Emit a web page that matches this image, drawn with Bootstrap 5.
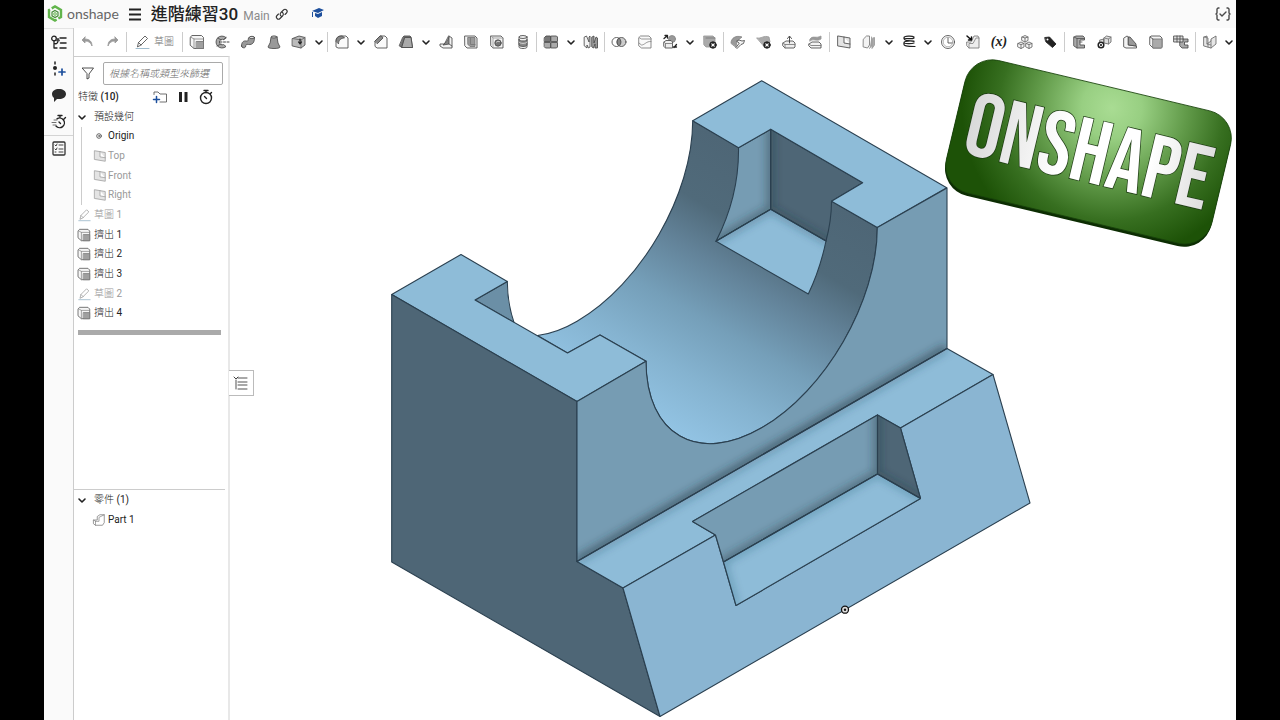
<!DOCTYPE html>
<html lang="zh-Hant">
<head>
<meta charset="utf-8">
<meta name="viewport" content="width=device-width, initial-scale=1">
<title>進階練習30</title>
<link href="https://cdn.jsdelivr.net/npm/bootstrap@5.3.0/dist/css/bootstrap.min.css" rel="stylesheet">
<script src="https://cdn.jsdelivr.net/npm/bootstrap@5.3.0/dist/js/bootstrap.bundle.min.js"></script>
<style>
body{background:#000;font-family:Roboto,"Noto Sans CJK TC",sans-serif;font-size:10px;line-height:16px;color:#222}
.app{margin:0 44px;background:#fff}
button{border:0;background:none;padding:0;color:inherit;line-height:inherit}
svg{display:block}
.ic{width:16px;height:16px;flex:none;fill:none;stroke:#4a4a4a;stroke-width:.85;stroke-linejoin:round;stroke-linecap:round}
.ic-sm{width:14px;height:14px}
.ic-xs{width:10px;height:10px}
.ic-dark{stroke:#222;stroke-width:1.4}
.ic-soft{stroke:#999}
.topbar{height:28px;background:#fafafa;padding:0 5px 0 3px}
.wordmark{font-family:Lato,sans-serif;font-size:14px;color:#666;margin:0 9px 0 4px}
.doc-title{font-size:17px;font-weight:500;line-height:28px;margin:0 5px 0 9px;color:#222}
.branch{font-size:12px;color:#8a8a8a;margin-right:4px}
.learn{margin-left:22px}
.rail{width:30px;background:#fafafa;border-right:1px solid #ccc}
.rail button{height:26px}
.rail .tab-on{height:28px;border-top:1px solid #e4e4e4}
.rail .rail-end{height:28px;border-bottom:1px solid #d4d4d4}
.tools{height:28px}
.tools .lead-btn{width:26px}
.t-ico{flex:26 1 0}
.t-chev{flex:14 1 0}
.t-sep{flex:3 1 0}
.t-ico,.t-chev,.t-sep,.lead-btn{display:flex;align-items:center;justify-content:center;min-width:0}
.t-sep::after,.bar-sep::after{content:"";width:1px;height:20px;background:#ccc;flex:none}
.bar-sep{width:2px;display:flex;align-items:center}
.sketch-btn{width:54px;color:#777;padding-left:6px}
.side{width:156px;border-top:1px solid #ccc;border-right:2px solid #e8e8e8}
.filter-row{height:30px;padding:2px 5px 0 6px}
.filter-row input{width:120px;height:23px;font-size:10px;font-weight:300;font-style:italic;padding:0 5px;border:1px solid #aaa;border-radius:2px;line-height:16px}
.filter-row input::placeholder{color:#666}
.feat-head{height:20px;gap:7px;padding:0 14px 1px 4px;font-weight:500}
.cj{font-weight:300}
.tree{height:216px}
.tree li{flex:1 1 0;min-height:0}
.row-top{gap:3px;padding-left:3px}
.row-sub{gap:1px;padding-left:11px;margin-left:7px;border-left:1px solid #ccc}
.part-row{gap:2px;padding-left:18px}
.muted{color:#999}
.rollback{height:5px;background:#aaa;margin:7px 7px 0 4px}
.parts{height:231px;border-top:1px solid #ccc;margin-right:3px}
.parts li{height:20px}
.flyout{position:absolute;left:-1px;top:314px;width:25px;height:26px;border:1px solid #bbb;border-left:0;background:#fff;display:flex;align-items:center;justify-content:center}
.e{stroke:#2b4050;stroke-width:1.1;stroke-linejoin:round;stroke-linecap:round}
</style>
</head>
<body>
<svg width="0" height="0" class="position-absolute" aria-hidden="true">
<defs>
<symbol id="chev" viewBox="0 0 10 10"><path d="M2 4l3 3 3-3" stroke="#222" stroke-width="1.6"/></symbol>
<symbol id="pencil" viewBox="0 0 16 16"><path d="M3.500 12.500l1-4L11 2l2.500 2.500L7 11zM4.500 8.500L7 11" /><path d="M2 14.500h13" stroke="#8fb0c4"/></symbol>
<symbol id="extrude" viewBox="0 0 16 16"><path d="M1.500 3L3 1.500h9.500l2 2v11H5l-3.500-3z" fill="#f6f6f6"/><path d="M1.500 3L5 5h9.500M5 5v9.500" stroke="#888"/><path d="M7.500 7.500h7v7h-7z" fill="#a0a0a0" stroke="#777"/></symbol>
<symbol id="plane" viewBox="0 0 16 16"><path d="M2 2l12 2v10L2 12zM8 3v6l6 1" fill="#e4e4e4"/></symbol>
<symbol id="timer" viewBox="0 0 16 16"><circle cx="8" cy="9" r="5.500"/><path d="M8 3.500V2M6 1.500h4M12.500 4.500l1-1M8.500 9.500L6.500 7.500"/></symbol>
</defs>
</svg>
<div class="app d-flex flex-column vh-100 overflow-hidden">
  <header class="topbar d-flex align-items-center">
    <svg width="16" height="18" viewBox="0 0 16 18" fill="none"><path d="M8 1.500l6 3.500v7L8 15.500 2 12V5z" stroke="#62b54c" stroke-width="2.400" stroke-dasharray="17 2"/><path d="M8 5.500l3 1.700v3.600L8 12.500l-3-1.700V7.200z" stroke="#4a8f3d" stroke-width="1.200"/><circle cx="8" cy="9" r="1.300" stroke="#62b54c"/></svg>
    <span class="wordmark">onshape</span>
    <button aria-label="Menu"><svg width="14" height="14" viewBox="0 0 14 14"><path d="M1 2.500h12M1 7.500h12M1 12.500h12" stroke="#222" stroke-width="2"/></svg></button>
    <h1 class="doc-title mb-0">進階練習30</h1>
    <span class="branch mt-1">Main</span>
    <button aria-label="Link"><svg class="ic" viewBox="0 0 16 16"><path d="M7 10a2.300 2.300 0 0 1 0-3.500l2.500-2.500a2 2 0 0 1 3 3l-1.500 1.500M8.500 6.500a2.300 2.300 0 0 1 0 3.500L6 12.500a2 2 0 0 1-3-3L4.500 8" stroke="#333" stroke-width="1.100"/></svg></button>
    <button class="learn" aria-label="Learning center"><svg width="12" height="14" viewBox="0 0 12 14" fill="#1d4f9c"><path d="M0 4l7-3 5 2-6 3z"/><path d="M3 6l3 1 4-2v4L6 11 3 9zM0 5h1v5H0z"/></svg></button>
    <button class="ms-auto" aria-label="Custom features"><svg class="ic" viewBox="0 0 16 16"><path d="M4 2H3L2 3v4L1 8l1 1v4l1 1h1M12 2h1l1 1v4l1 1-1 1v4l-1 1h-1M5 8l2 2 4-4" stroke-width="1.400"/></svg></button>
  </header>
  <div class="d-flex flex-grow-1 overflow-hidden">
    <nav class="rail d-flex flex-column flex-shrink-0">
      <button class="tab-on d-flex align-items-center justify-content-center" aria-label="Feature list"><svg class="ic" viewBox="0 0 16 16"><circle cx="3" cy="3.500" r="2.300" stroke="#222" stroke-width="1.300"/><path d="M3 6v7h3M3 8.500c3 1 4-1 4-3" stroke="#222" stroke-width="1.300"/><path d="M9 3h6M9.500 8H15M9 13h6" stroke="#222" stroke-width="1.500"/><path d="M5.500 5.500L7 3l1.500 2.500z" fill="#222"/></svg></button>
      <button class="d-flex align-items-center justify-content-center" aria-label="Insert"><svg class="ic" viewBox="0 0 16 16"><path d="M4 1v2M4 12v2" stroke="#222" stroke-width="1.500"/><circle cx="4" cy="7" r="2" fill="#222" stroke="none"/><path d="M11 8v6M8 11h6" stroke="#1d4f9c" stroke-width="1.700"/></svg></button>
      <button class="d-flex align-items-center justify-content-center" aria-label="Comments"><svg width="16" height="16" viewBox="0 0 16 16"><path d="M8 2c4 0 7 2 7 5s-3 5-7 5l-2 0-3 3 0-4C2 10 1 9 1 7c0-3 3-5 7-5z" fill="#2c2c2c"/></svg></button>
      <button class="rail-end d-flex align-items-center justify-content-center" aria-label="History"><svg class="ic" viewBox="0 0 16 16"><path d="M6 4.800a4.800 4.800 0 1 1-1 7.200M9 3.500V2M7 1.500h4M13 5l1.500-1.500M9.500 9.500L8 8" stroke="#222" stroke-width="1.400"/><path d="M3 6h3M1 8.500h4M2 11h3" stroke="#555"/></svg></button>
      <button class="d-flex align-items-center justify-content-center" aria-label="Properties"><svg class="ic" viewBox="0 0 16 16"><rect x="2" y="1" width="12" height="13" rx="1" stroke="#333" stroke-width="1.300"/><path d="M4 4l1 1 1-2M8 4h4M4 8l1 1 1-2M8 8h4M4 11h1M8 11h4" stroke="#222"/></svg></button>
    </nav>
    <div class="d-flex flex-column flex-grow-1 overflow-hidden">
      <div class="tools d-flex align-items-stretch" role="toolbar">
        <button class="lead-btn" aria-label="Undo"><svg class="ic" viewBox="0 0 16 16"><path d="M6 3L3 6l3 3V7c4 0 6 2 7 5 0-4-2-7-7-7z" fill="#999" stroke="#999"/></svg></button>
        <button class="lead-btn" aria-label="Redo"><svg class="ic" viewBox="0 0 16 16"><path d="M10 3l3 3-3 3V7c-4 0-6 2-7 5 0-4 2-7 7-7z" fill="#999" stroke="#999"/></svg></button>
        <span class="bar-sep"></span>
        <button class="sketch-btn d-flex align-items-center"><svg class="ic"><use href="#pencil"/></svg><span class="ms-1 cj">草圖</span></button>
        <span class="bar-sep"></span>
        <div class="d-flex flex-grow-1">
          <button class="t-ico" aria-label="Extrude"><svg class="ic"><use href="#extrude"/></svg></button>
          <button class="t-ico" aria-label="Revolve"><svg class="ic" viewBox="0 0 16 16"><path d="M12 3.500a6 6 0 1 0 0 9L9.500 10.500a2.800 2.800 0 1 1 0-5z" fill="#aaa"/><path d="M12 3.500L9.500 5.500M4 4l3 2M3 12l4-2"/><path d="M6 8h9" stroke="#222" stroke-dasharray="2 1.500"/></svg></button>
          <button class="t-ico" aria-label="Sweep"><svg class="ic" viewBox="0 0 16 16"><path d="M1.500 12c0-4 2-5.500 5-5 2 .4 1.500-1 2-3 .5-1.500 4-2 6-.5 0 5-2 7.500-6 7-2.500-.5-2.500 0-3 2.500-1 1.500-4 1-4-1z" fill="#999"/><ellipse cx="12" cy="3.500" rx="2.500" ry="1.200" fill="#ddd"/></svg></button>
          <button class="t-ico" aria-label="Loft"><svg class="ic" viewBox="0 0 16 16"><path d="M5 3c0-1 6-1 6 0l1 6 2 4c0 2-12 2-12 0l2-4z" fill="#999"/><ellipse cx="8" cy="3" rx="3" ry="1" fill="#ddd"/></svg></button>
          <button class="t-ico" aria-label="Thicken"><svg class="ic" viewBox="0 0 16 16"><path d="M1.500 4.500L8 2l6 1.500V11l-4 3-8.500-2z" fill="#bbb"/><path d="M1.500 4.500L10 6l4-2.500M10 6v8" stroke="#666"/><path d="M9 5v4M7.500 8L9 10l1.500-2" stroke="#222" stroke-width="1.200"/></svg></button>
          <button class="t-chev" aria-label="More"><svg class="ic ic-xs"><use href="#chev"/></svg></button>
          <span class="t-sep"></span>
          <button class="t-ico" aria-label="Fillet"><svg class="ic" viewBox="0 0 16 16"><path d="M2 12.500V7c0-3 2-5 5-5h5l2 2v10H4.500z" fill="#fafafa"/><path d="M2 7c0-3 2-5 5-5h1.500l2 2C7 4 4.500 6 4.500 9.500z" fill="#888"/></svg></button>
          <button class="t-chev" aria-label="More"><svg class="ic ic-xs"><use href="#chev"/></svg></button>
          <button class="t-ico" aria-label="Chamfer"><svg class="ic" viewBox="0 0 16 16"><path d="M2 12V7l5-5h5l2 2v10H4.500z" fill="#fafafa"/><path d="M2 7l5-5h1.500l1.500 2-5.500 5.500z" fill="#888"/></svg></button>
          <button class="t-ico" aria-label="Draft"><svg class="ic" viewBox="0 0 16 16"><path d="M5 3l1-1h6l1 1 1.500 10.500H4L1.500 12z" fill="#777"/><path d="M7 3.500h6l1.500 10H4z" fill="#aaa"/></svg></button>
          <button class="t-chev" aria-label="More"><svg class="ic ic-xs"><use href="#chev"/></svg></button>
          <button class="t-ico" aria-label="Rib"><svg class="ic" viewBox="0 0 16 16"><path d="M11 2l3 2v10H5l-3-2v-2h4z" fill="#f3f3f3"/><path d="M11 3v7l-6 1c3-2 5-5 6-8z" fill="#888"/><path d="M11 10l3 2"/></svg></button>
          <button class="t-ico" aria-label="Shell"><svg class="ic" viewBox="0 0 16 16"><path d="M2 2h10l2 2v10H4l-2-2z" fill="#f3f3f3"/><path d="M5 3.500h7v9H7l-2-2z" fill="#999" stroke="#777"/><path d="M7.500 4v6.500H12" stroke="#777"/></svg></button>
          <button class="t-ico" aria-label="Hole"><svg class="ic" viewBox="0 0 16 16"><path d="M2 2h10l2 2v10H4l-2-2z" fill="#f3f3f3"/><path d="M2 2l2 2h10M4 4v10" stroke="#999"/><circle cx="9" cy="9" r="3.200" fill="#777"/><path d="M7.500 8a2.500 2.500 0 0 1 3-.5" stroke="#ddd"/></svg></button>
          <button class="t-ico" aria-label="External thread"><svg class="ic" viewBox="0 0 16 16"><path d="M4 3v10c0 2 8 2 8 0V3" fill="#f3f3f3"/><path d="M4 5.500c0 2 8 2 8 0v5.500c0 2-8 2-8 0z" fill="#888"/><ellipse cx="8" cy="3" rx="4" ry="1.500" fill="#eee"/><path d="M4 8c0 2 8 2 8 0" stroke="#ddd"/></svg></button>
          <span class="t-sep"></span>
          <button class="t-ico" aria-label="Pattern"><svg class="ic" viewBox="0 0 16 16"><path d="M1.500 3.500l1.500-1.500h4.500v5.500h-6z" fill="#777"/><path d="M8.500 2h5l1 1v4.500h-6zM1.500 8.500h6V14H2.500l-1-1zM8.500 8.500h6V13l-1 1h-5z" fill="#aaa"/></svg></button>
          <button class="t-chev" aria-label="More"><svg class="ic ic-xs"><use href="#chev"/></svg></button>
          <button class="t-ico" aria-label="Mirror"><svg class="ic" viewBox="0 0 16 16"><path d="M1.500 3l2-1 2.500 6V3l1-1v11l-1.500 1L4 11v3l-2.500-2z" fill="#f3f3f3"/><path d="M9 3l2-1v7l2-6 1.500 1v10H12v-4l-1.500 4L9 13z" fill="#999"/></svg></button>
          <span class="t-sep"></span>
          <button class="t-ico" aria-label="Boolean"><svg class="ic" viewBox="0 0 16 16"><circle cx="5.500" cy="8" r="4.500"/><circle cx="10.500" cy="8" r="4.500" fill="#ccc"/><path d="M8 4.200a4.500 4.500 0 0 1 0 7.600 4.500 4.500 0 0 1 0-7.600z" fill="#888"/></svg></button>
          <button class="t-ico" aria-label="Split"><svg class="ic" viewBox="0 0 16 16"><path d="M2 3.500L3.500 2H12l2 2v10H4.500L2 12z" fill="#fafafa" stroke="#777"/><path d="M2 9l2.500 2c3.500 0 4.500-4 9.500-3.500M2 3.500L4.500 5H14" stroke="#888"/></svg></button>
          <button class="t-ico" aria-label="Transform"><svg class="ic" viewBox="0 0 16 16"><circle cx="10" cy="5" r="3.500" fill="#999" stroke="#888"/><path d="M2 8l2-1.500h5l1.500 1.500v6H3.500L2 12.500z" fill="#eee"/><path d="M2 8l1.500 1.500h7M3.500 9.500V14" stroke="#777"/><path d="M2 4.500L5 2M3 1.500h2.500V4M12 13.500l2.500-3M14.500 13h-3" stroke="#222" stroke-width="1.300"/></svg></button>
          <button class="t-chev" aria-label="More"><svg class="ic ic-xs"><use href="#chev"/></svg></button>
          <button class="t-ico" aria-label="Delete part"><svg class="ic" viewBox="0 0 16 16"><path d="M2 2h9l2 2v9H4l-2-2z" fill="#aaa" stroke="#999"/><path d="M4 4h9" stroke="#777"/><circle cx="11" cy="11" r="3.300" fill="#222" stroke="#222"/><path d="M9.800 9.800l2.400 2.400M12.200 9.800l-2.400 2.400" stroke="#fff" stroke-width="1.200"/></svg></button>
          <span class="t-sep"></span>
          <button class="t-ico" aria-label="Modify fillet"><svg class="ic" viewBox="0 0 16 16"><path d="M1 9c0-5 5-8 11-6l-5 4-1 6z" fill="#999" stroke="#888"/><path d="M7 7l2-1 3 1 2.500-.5-1 3-2.500 1-4 4-1-1 3-4z" fill="#f3f3f3"/></svg></button>
          <button class="t-ico" aria-label="Delete face"><svg class="ic" viewBox="0 0 16 16"><path d="M1 4c4 1 7-3 12-1l1 5-6 4z" fill="#aaa" stroke="#999"/><circle cx="11" cy="11" r="3.300" fill="#222" stroke="#222"/><path d="M9.800 9.800l2.400 2.400M12.200 9.800l-2.400 2.400" stroke="#fff" stroke-width="1.200"/></svg></button>
          <button class="t-ico" aria-label="Move face"><svg class="ic" viewBox="0 0 16 16"><path d="M2 9l3-2h7l2 2v4l-1 1H4l-2-2z" fill="#eee"/><path d="M2 9l2 1.500h10M4 10.500V14" stroke="#777"/><path d="M8.500 9V3M6.500 4.500l2-2.500 2 2.500" stroke="#333"/></svg></button>
          <button class="t-ico" aria-label="Replace face"><svg class="ic" viewBox="0 0 16 16"><path d="M3 5c3-4 6 0 11-3v3c-5 3-7-1-11 2z" fill="#999" stroke="#999"/><path d="M2 10l3-2h7l2 2v4H4l-2-2z" fill="#f3f3f3"/><path d="M2 10l2 1.500h10" stroke="#777"/></svg></button>
          <span class="t-sep"></span>
          <button class="t-ico" aria-label="Plane"><svg class="ic"><use href="#plane"/></svg></button>
          <button class="t-ico" aria-label="Offset surface"><svg class="ic" viewBox="0 0 16 16"><path d="M2.500 5l3-3h3v9l-2 3-4-1z" fill="#f3f3f3" stroke="#777"/><path d="M10.500 3v9l-2 2.500M12 4l1.500-.5V11L11 14.500V5z" fill="#aaa" stroke="#999"/></svg></button>
          <button class="t-chev" aria-label="More"><svg class="ic ic-xs"><use href="#chev"/></svg></button>
          <button class="t-ico" aria-label="Helix"><svg class="ic" viewBox="0 0 16 16"><path d="M13 3c-2-1.500-10-1-10 .5S12 5 13 4M3 4c-1 3 8 3 10 3M13 7.500C10 6.500 3 7 3 8.500s8 1.500 10 .5M3 9c-1 3 3 3.500 11 3.500" stroke="#222" stroke-width="1.200"/></svg></button>
          <button class="t-chev" aria-label="More"><svg class="ic ic-xs"><use href="#chev"/></svg></button>
          <button class="t-ico" aria-label="Measure"><svg class="ic" viewBox="0 0 16 16"><circle cx="8" cy="8" r="6.500"/><circle cx="8" cy="8" r="4.800" stroke="#aaa"/><path d="M8 4v5h4"/></svg></button>
          <button class="t-ico" aria-label="Derived"><svg class="ic" viewBox="0 0 16 16"><path d="M2 8h4l3-6h4l1 2v10H4l-2-2z" fill="#eee" stroke="#777"/><path d="M4 14V9.500h4L11 4h3" stroke="#888"/><path d="M2 2l4.500 4M6.500 3v3H3.500" stroke="#111" stroke-width="1.500"/></svg></button>
          <button class="t-ico" aria-label="Variable"><svg width="18" height="16" viewBox="0 0 18 16"><text x="9" y="12" text-anchor="middle" font-family="Liberation Serif, serif" font-weight="700" font-style="italic" font-size="14" fill="#222">(x)</text></svg></button>
          <button class="t-ico" aria-label="Composite part"><svg class="ic" viewBox="0 0 16 16"><g fill="#f6f6f6" stroke="#666"><path d="M5 3l3-1.500L11 3v3.500L8 8 5 6.500zM5 3l3 1 3-1M8 4v4M1 9.500L4 8l3 1.500V13l-3 1.500L1 13zM1 9.500l3 1 3-1M4 10.500v4M9 9.500L12 8l3 1.500V13l-3 1.500L9 13zM9 9.500l3 1 3-1M12 10.500v4"/></g></svg></button>
          <button class="t-ico" aria-label="Tag"><svg class="ic" viewBox="0 0 16 16"><path d="M3 3.500l4.500-.5L14 10l-3.500 3.500L4 8z" fill="#222" stroke="#222"/><circle cx="5.500" cy="5.500" r="1" fill="#fff" stroke="none"/></svg></button>
          <span class="t-sep"></span>
          <button class="t-ico" aria-label="Sheet metal"><svg class="ic" viewBox="0 0 16 16"><path d="M3 3l2-1h7l1.500 1.500V6H9v5h4.500v3H6l-3-2z" fill="#aaa"/><path d="M3 3l3 1.500h7.500M6 4.500V14M9 8h2" stroke="#555"/></svg></button>
          <button class="t-ico" aria-label="Frame"><svg class="ic" viewBox="0 0 16 16"><path d="M8 4l2.500-2L15 3v5l-2.500 2-4.500-1zM4 6l4-1v4l-2 1-2-1z" fill="#ddd" stroke="#666"/><path d="M8 4l4.500 1L15 3M12.500 5v5" stroke="#777"/><circle cx="5" cy="11" r="2.800" fill="#fff" stroke="#222" stroke-width="1.500"/><path d="M4 10l2 2M6 10l-2 2" stroke="#222"/></svg></button>
          <button class="t-ico" aria-label="Gusset"><svg class="ic" viewBox="0 0 16 16"><path d="M2 4l3-2 1.500 1v8l8 1v2H4l-2-1z" fill="#f3f3f3"/><path d="M6.500 3H8l6 7v2l-7.500-1z" fill="#999"/></svg></button>
          <button class="t-ico" aria-label="End cap"><svg class="ic" viewBox="0 0 16 16"><path d="M2 3l1-1h9l2 2v9l-1 1H5l-3-3z" fill="#f3f3f3"/><path d="M5 5h9v9H5z" fill="#aaa" stroke="#777"/><path d="M2 3l3 2"/></svg></button>
          <button class="t-ico" aria-label="Cut list"><svg class="ic" viewBox="0 0 16 16"><path d="M7 5h8v3h-3.500v3H15v3H9l-2-2z" fill="#aaa"/><path d="M1 2h9v6H1zM1 5h9M4 2v6M7 2v6" fill="#ddd"/></svg></button>
          <span class="t-sep"></span>
          <button class="t-ico" aria-label="Section tools"><svg class="ic" viewBox="0 0 16 16"><path d="M2 3l3-1v8l4-3V5l5-3v8l-5 4-7-2z" fill="#e6e6e6" stroke="#666"/><path d="M2 3l4 1v9M9 7v7M5 10l4 1" stroke="#777"/></svg></button>
          <button class="t-chev" aria-label="More"><svg class="ic ic-xs"><use href="#chev"/></svg></button>
        </div>
      </div>
      <div class="d-flex flex-grow-1">
        <aside class="side d-flex flex-column flex-shrink-0">
          <div class="filter-row d-flex align-items-center justify-content-between">
            <svg class="ic" viewBox="0 0 16 16"><path d="M2.500 3h11L9 9v4l-2 1V9z" stroke="#333"/></svg>
            <input type="text" aria-label="Filter" placeholder="根據名稱或類型來篩選">
          </div>
          <div class="feat-head d-flex align-items-center">
            <span class="me-auto"><span class="cj">特徵</span> (10)</span>
            <svg class="ic" viewBox="0 0 16 16"><path d="M2 5.500V3h4l2 2h6.500v8H8" stroke="#555"/><path d="M4.500 7.500v6M1.500 10.500h6" stroke="#1d4f9c" stroke-width="1.500"/></svg>
            <svg width="16" height="16" viewBox="0 0 16 16"><path d="M4 3h3v10H4zM9.500 3h3v10h-3z" fill="#222"/></svg>
            <svg class="ic ic-dark"><use href="#timer"/></svg>
          </div>
          <ul class="tree list-unstyled d-flex flex-column mb-0">
            <li class="row-top d-flex align-items-center"><svg class="ic ic-xs"><use href="#chev"/></svg><span class="ms-1 cj">預設幾何</span></li>
            <li class="row-sub d-flex align-items-center"><svg class="ic ic-sm" viewBox="0 0 14 14"><circle cx="6" cy="7" r="2.300"/><circle cx="6" cy="7" r=".4"/></svg><span>Origin</span></li>
            <li class="row-sub muted d-flex align-items-center"><svg class="ic ic-sm ic-soft"><use href="#plane"/></svg><span>Top</span></li>
            <li class="row-sub muted d-flex align-items-center"><svg class="ic ic-sm ic-soft"><use href="#plane"/></svg><span>Front</span></li>
            <li class="row-sub muted d-flex align-items-center"><svg class="ic ic-sm ic-soft"><use href="#plane"/></svg><span>Right</span></li>
            <li class="row-top muted d-flex align-items-center"><svg class="ic ic-sm ic-soft"><use href="#pencil"/></svg><span><span class="cj">草圖</span> 1</span></li>
            <li class="row-top d-flex align-items-center"><svg class="ic ic-sm"><use href="#extrude"/></svg><span><span class="cj">擠出</span> 1</span></li>
            <li class="row-top d-flex align-items-center"><svg class="ic ic-sm"><use href="#extrude"/></svg><span><span class="cj">擠出</span> 2</span></li>
            <li class="row-top d-flex align-items-center"><svg class="ic ic-sm"><use href="#extrude"/></svg><span><span class="cj">擠出</span> 3</span></li>
            <li class="row-top muted d-flex align-items-center"><svg class="ic ic-sm ic-soft"><use href="#pencil"/></svg><span><span class="cj">草圖</span> 2</span></li>
            <li class="row-top d-flex align-items-center"><svg class="ic ic-sm"><use href="#extrude"/></svg><span><span class="cj">擠出</span> 4</span></li>
          </ul>
          <div class="rollback"></div>
          <ul class="parts list-unstyled mt-auto mb-0">
            <li class="row-top d-flex align-items-center"><svg class="ic ic-xs"><use href="#chev"/></svg><span class="ms-1"><span class="cj">零件</span> (1)</span></li>
            <li class="part-row d-flex align-items-center"><svg class="ic ic-sm" viewBox="0 0 16 16"><path d="M2 8h4V4l3-2h5v9l-2 3H4l-2-1.500z" stroke="#777"/><path d="M4 9.500V14M4 9.500L2 8M4 9.500h4V5l6-3" stroke="#888"/></svg><span>Part 1</span></li>
          </ul>
        </aside>
        <main class="position-relative flex-grow-1">
          <button class="flyout" aria-label="Tables"><svg class="ic" viewBox="0 0 16 16"><path d="M5 3h9M5 7h9M5 10h9M5 14h9M3 5v9" stroke="#333"/><path d="M1 2l2 2 2-2" stroke="#222"/></svg></button>
          <svg width="100%" height="100%" viewBox="230 56 1006 664" preserveAspectRatio="xMidYMid slice">
            <defs>
              <linearGradient id="cyl" gradientUnits="userSpaceOnUse" x1="692.700" y1="120.800" x2="553.700" y2="361.500"><stop offset="0" stop-color="#4e6676"/><stop offset=".24" stop-color="#506a7a"/><stop offset=".4" stop-color="#628298"/><stop offset=".6" stop-color="#759fb9"/><stop offset=".8" stop-color="#85b3d0"/><stop offset="1" stop-color="#92c3e3"/></linearGradient>
              <radialGradient id="green" gradientUnits="userSpaceOnUse" cx="12" cy="-48" r="150"><stop offset="0" stop-color="#a9dc93"/><stop offset=".2" stop-color="#98cf82"/><stop offset=".5" stop-color="#619a49"/><stop offset=".75" stop-color="#376f20"/><stop offset="1" stop-color="#1d5207"/></radialGradient>
              <linearGradient id="letters"><stop offset="0" stop-color="#d8d8d8"/><stop offset=".4" stop-color="#fff"/><stop offset=".75" stop-color="#fff"/><stop offset="1" stop-color="#ddd"/></linearGradient>
              <filter id="soft" filterUnits="userSpaceOnUse" x="380" y="70" width="660" height="650"><feGaussianBlur stdDeviation="4.500"/></filter>
              <path id="wall" d="M577 401.500L646 361.200C646 434.900 697.900 464.800 761.700 427.800C825.500 390.900 877.300 301.100 877.300 227.400L947 188V348.500L577 561.500Z"/>
              <path id="ledge" d="M577 561.500L947 348.500L993 374.500L900.500 428L877.500 415L692.500 521.500L715.500 535L623 588Z"/>
              <path id="pback" d="M692.500 521.500L877.500 415V474L723.500 562L715.500 535Z"/>
              <path id="pfloor" d="M723.500 562L877.500 474L920.500 498.500L736 605.500Z"/>
              <path id="pside" d="M877.500 415L900.500 428L920.500 498.500L877.500 474Z"/>
              <path id="nleft" d="M738.500 147.700L770.700 129.300V209.300L716 241.300C731 212 739 180 738.500 147.700Z"/>
              <path id="nback" d="M770.700 129.300L862.700 182.700L831.500 201.300C831.500 215 829.500 228 826 241L770.700 209.300Z"/>
              <path id="nfloor" d="M716 241.300L770.700 209.300L826 241C822 260 816 278 808.300 294Z"/>
              <clipPath id="cw"><use href="#wall"/></clipPath><clipPath id="cl"><use href="#ledge"/></clipPath><clipPath id="cb"><use href="#pback"/></clipPath><clipPath id="cf"><use href="#pfloor"/></clipPath><clipPath id="cs"><use href="#pside"/></clipPath><clipPath id="c1"><use href="#nleft"/></clipPath><clipPath id="c2"><use href="#nback"/></clipPath><clipPath id="c3"><use href="#nfloor"/></clipPath>
            </defs>
            <path class="e" fill="url(#cyl)" d="M877.300 227.400L692.700 120.800C692.700 194.500 640.900 284.300 577.100 321.200C563 329.500 550 334 537.500 335.500L567.500 353L600 335L646 361.200C646 434.900 697.900 464.800 761.700 427.800C825.500 390.900 877.300 301.100 877.300 227.400Z"/>
            <use href="#nleft" class="e" fill="#769cb3"/><use href="#nback" class="e" fill="#4e6676"/><use href="#nfloor" class="e" fill="#8ebcd8"/>
            <g clip-path="url(#c1)"><path d="M770.700 125V209.300L712 243.500" fill="none" stroke="#22313b" stroke-opacity=".45" stroke-width="8" filter="url(#soft)"/></g>
            <g clip-path="url(#c2)"><path d="M770.700 125V209.300L830 243" fill="none" stroke="#22313b" stroke-opacity=".35" stroke-width="7" filter="url(#soft)"/></g>
            <g clip-path="url(#c3)"><path d="M712 243.500L770.700 209.300L830 243" fill="none" stroke="#22445a" stroke-opacity=".4" stroke-width="6" filter="url(#soft)"/></g>
            <path class="e" fill="#8ebcd8" d="M761.700 80.700L946.700 187.700L877.300 227.400L831.500 201.300L862.700 182.700L770.700 129.300L738.500 147.700L692.700 120.800Z"/>
            <path class="e" fill="#6b8fa6" d="M475 300L507.300 281.400C507.300 296 509.500 309 514 322.500Z"/>
            <path class="e" fill="#8ebcd8" d="M391.700 294.500L461 254.500L507.300 281.400L475 300L567.500 353L600 335L646 361.200L577 401.500Z"/>
            <path class="e" fill="#4e6676" d="M391.700 294.500L577 401.500V561.500L623 588L660 716.500L391.700 562Z"/>
            <use href="#wall" class="e" fill="#769cb3"/>
            <g clip-path="url(#cw)"><path d="M577 561.500L947 348.500" stroke="#22313b" stroke-opacity=".5" stroke-width="10" filter="url(#soft)"/></g>
            <use href="#ledge" class="e" fill="#8ebcd8"/>
            <g clip-path="url(#cl)"><path d="M577 561.500L947 348.500" stroke="#22445a" stroke-opacity=".4" stroke-width="5" filter="url(#soft)"/></g>
            <path class="e" fill="#8ab5d2" d="M623 588L715.500 535L736 605.500L920.500 498.500L900.500 428L993 374.500L1030 503L660 716.500Z"/>
            <use href="#pback" class="e" fill="#769cb3"/><use href="#pside" class="e" fill="#4e6676"/><use href="#pfloor" class="e" fill="#8ebcd8"/>
            <g clip-path="url(#cb)"><path d="M877.500 412V474L720 564" fill="none" stroke="#22313b" stroke-opacity=".45" stroke-width="8" filter="url(#soft)"/></g>
            <g clip-path="url(#cs)"><path d="M877.500 412V474L922 499" fill="none" stroke="#22313b" stroke-opacity=".35" stroke-width="7" filter="url(#soft)"/></g>
            <g clip-path="url(#cf)"><path d="M736 605.500L723.500 562L877.500 474L922 499" fill="none" stroke="#22445a" stroke-opacity=".35" stroke-width="5" filter="url(#soft)"/></g>
            <path class="e" fill="none" d="M577 561.500L947 348.500M723.500 562L877.500 474V415M877.500 474L920.500 498.500M716 241.300L770.700 209.300V129.300M770.700 209.300L826 241"/>
            <circle cx="845" cy="609.700" r="3.500" fill="#ddd" stroke="#111" stroke-width="1.300"/><circle cx="845" cy="609.700" r="1.200" fill="#111"/>
            <g transform="translate(1089 152) rotate(13.400)">
              <rect x="-137" y="-65" width="273" height="136" rx="28" fill="#0c2d02"/>
              <rect x="-137" y="-68" width="273" height="136" rx="28" fill="url(#green)" stroke="#17420a" stroke-width=".8"/>
              <text x="0" y="30" text-anchor="middle" font-family="'Bebas Neue','Oswald','Roboto Condensed','Liberation Sans Narrow','Liberation Sans',sans-serif" font-weight="400" font-size="90" fill="url(#letters)" stroke="#1c3a12" stroke-width="1.500" paint-order="stroke">ONSHAPE</text>
            </g>
          </svg>
        </main>
      </div>
    </div>
  </div>
</div>
</body>
</html>
